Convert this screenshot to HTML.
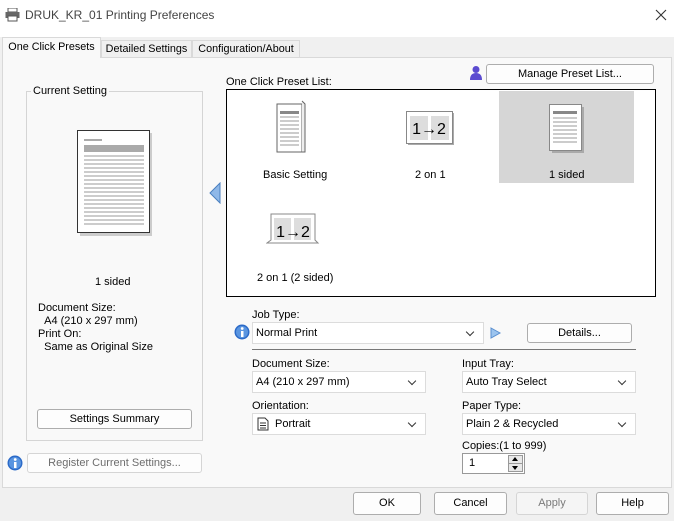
<!DOCTYPE html>
<html><head><meta charset="utf-8"><style>
*{box-sizing:border-box;margin:0;padding:0}
body{width:674px;height:521px;background:#f0f0f0;font-family:"Liberation Sans",sans-serif;font-size:11px;color:#000;position:relative;overflow:hidden}
.a{position:absolute;white-space:nowrap}
.btn{position:absolute;border:1px solid #adadad;border-radius:3px;background:#fdfdfd;text-align:center;line-height:18px}
.sel{position:absolute;border:1px solid #dcdcdc;background:#fff;padding-left:3px;line-height:20px}
.sel:after{content:"";position:absolute;right:10px;top:6px;width:5px;height:5px;border-right:1px solid #333;border-bottom:1px solid #333;transform:rotate(45deg)}
.tab{position:absolute;border:1px solid #d9d9d9;border-bottom:none;background:#f0f0f0;text-align:center;line-height:17px;font-size:10.8px}
</style></head><body>
<div class="a" style="left:0;top:0;width:674px;height:37px;background:#fff"></div>
<svg class="a" style="left:5px;top:8px" width="15" height="14"><rect x="3" y="0" width="9" height="4" fill="#fff" stroke="#555"/><rect x="0.5" y="4" width="14" height="6" fill="#666"/><rect x="3" y="8" width="9" height="5" fill="#fff" stroke="#555"/></svg>
<div class="a" style="left:25px;top:8px;font-size:12px;color:#444">DRUK_KR_01 Printing Preferences</div>
<svg class="a" style="left:655px;top:9px" width="12" height="12"><path d="M1 1 L11 11 M11 1 L1 11" stroke="#333" stroke-width="1.1"/></svg>
<div class="a" style="left:2px;top:57px;width:670px;height:431px;background:#f9f9f9;border:1px solid #d9d9d9"></div>
<div class="tab" style="left:101px;top:40px;width:91px;height:17px">Detailed Settings</div>
<div class="tab" style="left:192px;top:40px;width:108px;height:17px">Configuration/About</div>
<div class="tab" style="left:2px;top:37px;width:99px;height:21px;background:#f9f9f9;line-height:19px">One Click Presets</div>
<div class="a" style="left:26px;top:91px;width:177px;height:350px;border:1px solid #d5d5d5"></div>
<div class="a" style="left:31px;top:85px;background:#f9f9f9;padding:0 2px">Current Setting</div>
<svg class="a" style="left:76px;top:129px" width="78" height="108"><rect x="4" y="4" width="72" height="103" fill="#ccc"/><rect x="1.5" y="1.5" width="72" height="102" fill="#fff" stroke="#333"/><line x1="8" y1="11" x2="26" y2="11" stroke="#555"/><rect x="8" y="16" width="60" height="7" fill="#aaa"/><g stroke="#999"><line x1="8" y1="27" x2="68" y2="27"/><line x1="8" y1="31" x2="68" y2="31"/><line x1="8" y1="35" x2="68" y2="35"/><line x1="8" y1="39" x2="68" y2="39"/><line x1="8" y1="43" x2="68" y2="43"/><line x1="8" y1="47" x2="68" y2="47"/><line x1="8" y1="51" x2="68" y2="51"/><line x1="8" y1="55" x2="68" y2="55"/><line x1="8" y1="59" x2="68" y2="59"/><line x1="8" y1="63" x2="68" y2="63"/><line x1="8" y1="67" x2="68" y2="67"/><line x1="8" y1="71" x2="68" y2="71"/><line x1="8" y1="75" x2="68" y2="75"/><line x1="8" y1="79" x2="68" y2="79"/><line x1="8" y1="83" x2="68" y2="83"/><line x1="8" y1="87" x2="68" y2="87"/><line x1="8" y1="91" x2="68" y2="91"/><line x1="8" y1="95" x2="68" y2="95"/></g></svg>
<div class="a" style="left:95px;top:276px">1 sided</div>
<div class="a" style="left:38px;top:302px;line-height:13px">Document Size:<br>&nbsp;&nbsp;A4 (210 x 297 mm)<br>Print On:<br>&nbsp;&nbsp;Same as Original Size</div>
<div class="btn" style="left:37px;top:409px;width:155px;height:20px">Settings Summary</div>
<svg class="a" style="left:7px;top:455px" width="16" height="16"><circle cx="8" cy="8" r="7.5" fill="#2b6ac8"/><circle cx="8" cy="8" r="6" fill="#5a95e0"/><rect x="7" y="7" width="2.5" height="6" fill="#fff"/><circle cx="8.2" cy="4.5" r="1.4" fill="#fff"/></svg>
<div class="btn" style="left:27px;top:453px;width:175px;height:20px;color:#6d6d6d;border-color:#d5d5d5">Register Current Settings...</div>
<svg class="a" style="left:209px;top:182px" width="12" height="22"><path d="M11 1 L1 11 L11 21 Z" fill="#8fb8e8" stroke="#4a7fc0"/></svg>
<div class="a" style="left:226px;top:76px">One Click Preset List:</div>
<svg class="a" style="left:469px;top:65px" width="14" height="16"><circle cx="7" cy="4.5" r="3.5" fill="#5b4bd0"/><path d="M1 15 Q1 8 7 8 Q13 8 13 15 Z" fill="#5b4bd0"/></svg>
<div class="btn" style="left:486px;top:64px;width:168px;height:20px">Manage Preset List...</div>
<div class="a" style="left:226px;top:89px;width:430px;height:208px;border:1px solid #000;background:#fff"></div>
<div class="a" style="left:499px;top:91px;width:135px;height:92px;background:#d6d6d6"></div>
<svg class="a" style="left:276px;top:100px" width="32" height="54"><rect x="1" y="4" width="25" height="48" fill="#fff" stroke="#666"/><path d="M26 1 L29 4 L29 52 L26 52" fill="#eee" stroke="#666"/><rect x="4" y="11" width="19" height="3" fill="#888"/><g stroke="#999"><line x1="4" y1="17" x2="23" y2="17"/><line x1="4" y1="21" x2="23" y2="21"/><line x1="4" y1="25" x2="23" y2="25"/><line x1="4" y1="29" x2="23" y2="29"/><line x1="4" y1="33" x2="23" y2="33"/><line x1="4" y1="37" x2="23" y2="37"/><line x1="4" y1="41" x2="23" y2="41"/><line x1="4" y1="45" x2="23" y2="45"/></g></svg>
<svg class="a" style="left:406px;top:111px" width="50" height="36"><rect x="2" y="2" width="46" height="32" fill="#aaa"/><rect x="0.5" y="0.5" width="46" height="32" fill="#fff" stroke="#888"/><rect x="4" y="5" width="18" height="24" fill="#ddd"/><rect x="25" y="5" width="18" height="24" fill="#ddd"/><text x="23" y="23" font-family="Liberation Sans" font-size="16" text-anchor="middle">1→2</text></svg>
<svg class="a" style="left:549px;top:104px" width="36" height="50"><rect x="3" y="3" width="32" height="46" fill="#aaa"/><rect x="0.5" y="0.5" width="32" height="46" fill="#fff" stroke="#888"/><rect x="4" y="7" width="24" height="3" fill="#888"/><g stroke="#999"><line x1="4" y1="14" x2="28" y2="14"/><line x1="4" y1="18" x2="28" y2="18"/><line x1="4" y1="22" x2="28" y2="22"/><line x1="4" y1="26" x2="28" y2="26"/><line x1="4" y1="30" x2="28" y2="30"/><line x1="4" y1="34" x2="28" y2="34"/><line x1="4" y1="38" x2="28" y2="38"/></g></svg>
<div class="a" style="left:263px;top:169px">Basic Setting</div>
<div class="a" style="left:415px;top:169px">2 on 1</div>
<div class="a" style="left:549px;top:169px">1 sided</div>
<svg class="a" style="left:266px;top:213px" width="54" height="32"><path d="M5 1 L49 1 L49 27 L52 30 L1 30 L5 27 Z" fill="#fff" stroke="#888"/><rect x="8" y="5" width="17" height="22" fill="#ddd"/><rect x="28" y="5" width="17" height="22" fill="#ddd"/><text x="27" y="24" font-family="Liberation Sans" font-size="16" text-anchor="middle">1→2</text></svg>
<div class="a" style="left:257px;top:272px">2 on 1 (2 sided)</div>
<div class="a" style="left:252px;top:309px">Job Type:</div>
<svg class="a" style="left:234px;top:324px" width="16" height="16"><circle cx="8" cy="8" r="7.5" fill="#2b6ac8"/><circle cx="8" cy="8" r="6" fill="#5a95e0"/><rect x="7" y="7" width="2.5" height="6" fill="#fff"/><circle cx="8.2" cy="4.5" r="1.4" fill="#fff"/></svg>
<div class="sel" style="left:252px;top:322px;width:232px;height:22px">Normal Print</div>
<svg class="a" style="left:490px;top:327px" width="12" height="12"><path d="M1 1 L10 6 L1 11 Z" fill="#9cc4ee" stroke="#5a8fd0"/></svg>
<div class="btn" style="left:527px;top:323px;width:105px;height:20px">Details...</div>
<div class="a" style="left:252px;top:349px;width:384px;height:1px;background:#777"></div>
<div class="a" style="left:252px;top:358px">Document Size:</div>
<div class="sel" style="left:252px;top:371px;width:174px;height:22px">A4 (210 x 297 mm)</div>
<div class="a" style="left:462px;top:358px">Input Tray:</div>
<div class="sel" style="left:462px;top:371px;width:174px;height:22px">Auto Tray Select</div>
<div class="a" style="left:252px;top:400px">Orientation:</div>
<div class="sel" style="left:252px;top:413px;width:174px;height:22px;padding-left:22px">Portrait</div>
<svg class="a" style="left:257px;top:417px" width="12" height="14"><path d="M1 1 H8 L11 4 V13 H1 Z" fill="#fff" stroke="#333"/><g stroke="#333"><line x1="3" y1="6" x2="9" y2="6"/><line x1="3" y1="8.5" x2="9" y2="8.5"/><line x1="3" y1="11" x2="9" y2="11"/></g></svg>
<div class="a" style="left:462px;top:400px">Paper Type:</div>
<div class="sel" style="left:462px;top:413px;width:174px;height:22px">Plain 2 &amp; Recycled</div>
<div class="a" style="left:462px;top:440px">Copies:(1 to 999)</div>
<div class="a" style="left:462px;top:453px;width:63px;height:21px;border:1px solid #999;background:#fff;padding-left:6px;line-height:19px">1</div>
<div class="a" style="left:508px;top:455px;width:15px;height:17px;border:1px solid #999;background:#e8e8e8"></div>
<div class="a" style="left:508px;top:463px;width:15px;height:1px;background:#999"></div>
<div class="a" style="left:512px;top:457px;width:0;height:0;border:3px solid transparent;border-bottom:4px solid #000;border-top:none"></div>
<div class="a" style="left:512px;top:466px;width:0;height:0;border:3px solid transparent;border-top:4px solid #000;border-bottom:none"></div>
<div class="btn" style="left:353px;top:492px;width:68px;height:23px;line-height:21px">OK</div>
<div class="btn" style="left:434px;top:492px;width:73px;height:23px;line-height:21px">Cancel</div>
<div class="btn" style="left:516px;top:492px;width:72px;height:23px;line-height:21px;color:#7a7a7a;border-color:#d5d5d5;background:#f5f5f5">Apply</div>
<div class="btn" style="left:596px;top:492px;width:73px;height:23px;line-height:21px">Help</div>
</body></html>
